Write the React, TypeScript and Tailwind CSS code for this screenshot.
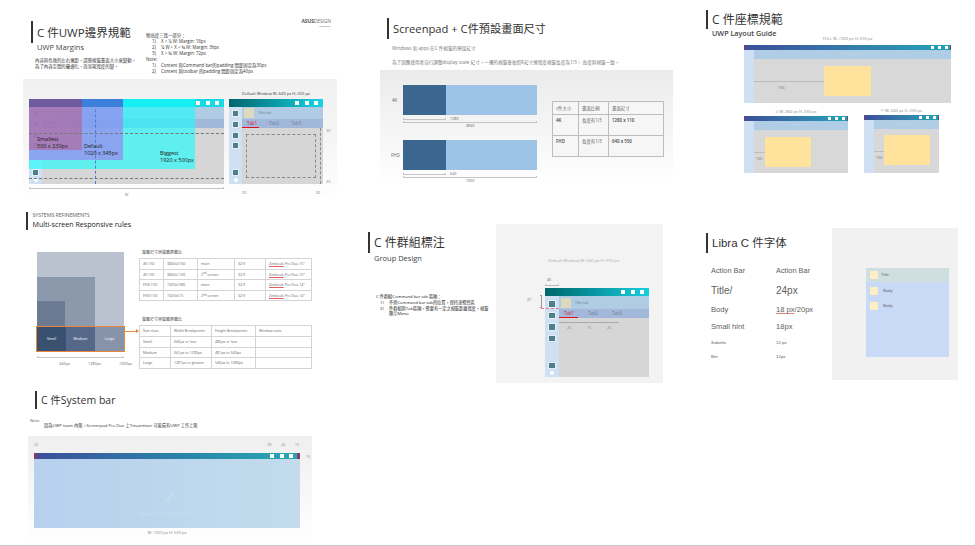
import type { ReactNode } from 'react';

const Zenbook = ({ size }: { size: string }) => (
  <>
    <span className="underline decoration-[#e06060]">Zenbook</span> Pro Duo {size}
  </>
);

function Heading({ title, sub, bar, text, subText }: { title: string; sub?: string; bar: string; text: string; subText?: string }) {
  return (
    <div className="flex gap-[4px]">
      <div className={`w-[2px] bg-[#333] shrink-0 ${bar}`} />
      <div>
        <div className={`text-[#333] whitespace-nowrap ${text}`}>{title}</div>
        {sub && <div className={`text-[#333] whitespace-nowrap ${subText}`}>{sub}</div>}
      </div>
    </div>
  );
}

function WinButtons({ box, gap }: { box: string; gap: string }) {
  return (
    <div className={`ml-auto flex items-center ${gap}`}>
      <div className={`bg-white ${box}`} />
      <div className={`bg-white ${box}`} />
      <div className={`bg-white ${box}`} />
    </div>
  );
}

function SideIcons({ icon, gap }: { icon: string; gap: string }) {
  const cls = `bg-[#4f7f8a] border border-[#e4eef6] ${icon}`;
  return (
    <div className={`flex flex-col items-center h-full ${gap}`}>
      <div className={cls} />
      <div className={cls} />
      <div className={cls} />
      <div className={cls} />
      <div className={`mt-auto ${cls}`} />
      <div className="w-[4px] h-[4px] rounded-full bg-white -mt-[2px] mb-[2px]" />
    </div>
  );
}

function AppWindow({ bar, side, head, tabs, tabGap, underline, icons, children }: {
  bar: string; side: string; head: string; tabs: string; tabGap: string; underline: string; icons: ReactNode; children?: ReactNode;
}) {
  return (
    <div className="flex flex-col h-full w-full">
      <div className={`flex items-center pr-[5px] shrink-0 ${bar}`}>
        <WinButtons box="w-[4px] h-[3.5px]" gap="gap-[5.5px]" />
      </div>
      <div className="flex flex-1">
        <div className={`bg-[#cfe0f2] shrink-0 ${side}`}>{icons}</div>
        <div className="flex flex-col flex-1">
          <div className={`bg-[#b0cbe4] flex items-center gap-[4px] pl-[2px] shrink-0 ${head}`}>
            <div className="w-[10px] h-[10px] bg-[#dcd9bf]" />
            <span className="text-[3.5px] text-[#6d7f90]">Title tab</span>
          </div>
          <div className={`bg-[#a2b8da] flex items-center pl-[5px] shrink-0 relative ${tabs} ${tabGap}`}>
            <span className="text-[4.4px] text-[#d8202a]">Tab1</span>
            <span className="text-[4.4px] text-[#6d7f90]">Tab2</span>
            <span className="text-[4.4px] text-[#6d7f90]">Tab3</span>
            <div className={`absolute left-0 bottom-0 h-[1px] bg-[#e0101c] ${underline}`} />
          </div>
          <div className="flex-1 bg-[#d6d6d6] relative">{children}</div>
        </div>
      </div>
    </div>
  );
}

function GuideWindow({ yellow, tbc, line }: { yellow: string; tbc: string; line: string }) {
  return (
    <div className="flex flex-col w-full h-full">
      <div className="h-[4.5px] bg-gradient-to-r from-[#3a4f9a] to-[#1ea3b8] flex items-center pr-[2px] border-x border-[#8a3a6a] shrink-0">
        <WinButtons box="w-[3px] h-[2.5px]" gap="gap-[4px]" />
      </div>
      <div className="flex flex-1">
        <div className="w-[10px] bg-[#cfe0f2] shrink-0" />
        <div className="flex flex-col flex-1">
          <div className="h-[9px] bg-[#b0cde6] flex items-center justify-center shrink-0">
            <span className="text-[3.5px] text-[#c3d6e8]">Window title</span>
          </div>
          <div className="flex-1 bg-[#d8d8d8] relative">
            <div className={`absolute left-0 h-px bg-[#bcbcbc] ${line}`} />
            <div className={`absolute bg-[#ffe29b] ${yellow}`} />
            <span className={`absolute text-[4px] text-[#888] ${tbc}`}>TBC</span>
          </div>
        </div>
      </div>
    </div>
  );
}

function RulesTable({ title, cols, rows, titleBox }: { title: string; cols: string[]; rows: ReactNode[][]; titleBox: string }) {
  return (
    <div className="w-[172px]">
      <div className={`text-[4px] text-[#444] pl-[3px] ${titleBox}`}>{title}</div>
      <table className="table-fixed w-full border-collapse">
        <colgroup>
          {cols.map((c, i) => <col key={i} className={c} />)}
        </colgroup>
        <tbody>
          {rows.map((r, i) => (
            <tr key={i} className="h-[10.6px]">
              {r.map((c, j) => (
                <td key={j} className="border border-[#d4d4d4] px-[3px] text-[3.6px] text-[#666] whitespace-nowrap overflow-hidden">{c}</td>
              ))}
            </tr>
          ))}
        </tbody>
      </table>
    </div>
  );
}

function Ruler({ width }: { width: string }) {
  return <div className={`h-[2px] border-x border-b border-[#c4c4c4] shrink-0 ${width}`} />;
}

function BarChart({ label, labelBox, part, whole }: { label: string; labelBox: string; part: string; whole: string }) {
  return (
    <div>
      <div className="flex items-center">
        <span className={`text-[4.5px] text-[#666] shrink-0 ${labelBox}`}>{label}</span>
        <div className="w-[134px] h-[30px] bg-[#9dc3e6]">
          <div className="w-[43px] h-full bg-[#3a6690]" />
        </div>
      </div>
      <div className="pl-[12px] mt-[1px] text-[3.8px] text-[#666]">
        <div className="flex items-center h-[5px] gap-[4px]">
          <Ruler width="w-[43px]" />
          <span>{part}</span>
        </div>
        <Ruler width="w-[134px]" />
        <div className="w-[134px] text-center h-[6px] leading-[6px]">{whole}</div>
      </div>
    </div>
  );
}

function TypeRow({ a, b, box }: { a: string; b: ReactNode; box: string }) {
  return (
    <div className={`flex items-center text-[#5e5e5e] ${box}`}>
      <span className="w-[65px]">{a}</span>
      <span>{b}</span>
    </div>
  );
}

function FontItem({ label, gap, top }: { label: string; gap: string; top: string }) {
  return (
    <div className={`flex items-center pl-[4px] ${gap} ${top}`}>
      <div className="w-[8px] h-[8px] bg-[#fdeec6]" />
      {label}
    </div>
  );
}

function NumItem({ n, children, indent }: { n: string; children: ReactNode; indent: string }) {
  return (
    <div className={`flex ${indent}`}>
      <span className="w-[9px] shrink-0">{n}</span>
      <span>{children}</span>
    </div>
  );
}

export default function App() {
  return (
    <div className='relative w-[975px] h-[546px] bg-white overflow-hidden font-["Open_Sans","Noto_Sans_CJK_TC",sans-serif]'>
      {/* UWP margins */}
      <section className="absolute left-[23px] top-[18px] w-[314px] flex flex-col">
        <div className="flex h-[61px] pl-[8px] pr-[6px]">
          <div className="w-[115px] shrink-0 pt-[3px]">
            <Heading title="C 件UWP邊界規範" sub="UWP Margins" bar="h-[22px]" text="text-[11.5px] leading-[18px] pt-[3px]" subText="text-[7.5px] leading-[10px] text-[#444]" />
            <div className="ml-[4px] mt-[5px] text-[4.4px] leading-[6px] text-[#333] whitespace-nowrap">
              <div>內容與色塊的左右邊距，請隨視窗畫面大小來變動。</div>
              <div>為了內容空間的最適化，而呈現寬度的變。</div>
            </div>
          </div>
          <div className="pt-[14px] text-[4.4px] leading-[6px] text-[#333] whitespace-nowrap">
            <div>物高度三寬一部分：</div>
            <NumItem n="1)" indent="pl-[6px]">X &lt; ¼ W: Margin: 18px</NumItem>
            <NumItem n="2)" indent="pl-[6px]">¼ W &lt; X &lt; ¾ W: Margin: 36px</NumItem>
            <NumItem n="3)" indent="pl-[6px]">X &gt; ¾ W: Margin: 72px</NumItem>
            <div>Note:</div>
            <NumItem n="1)" indent="pl-[6px]">Content 與Command bar的padding 間距固定為30px</NumItem>
            <NumItem n="2)" indent="pl-[6px]">Content 與toolbar 的padding 間距固定為40px</NumItem>
          </div>
          <div className="ml-auto pt-[1px] text-right leading-none text-[#777]">
            <div className="text-[5px] tracking-tight"><b className="text-[#555]">ASUS</b>DESIGN</div>
            <div className="text-[2.5px] mt-[1px]">Singapore</div>
          </div>
        </div>
        <div className="h-[121px] bg-gradient-to-b from-[#f1f1f1] via-[#f5f5f5] to-white px-[6px] pt-[12px] flex gap-[5px]">
          <div className="w-[195px] pt-[8px]">
            <div className="relative h-[85px]">
              <AppWindow bar="h-[8px] bg-[#18d8e4]" side="w-[13px] pt-[3px]" head="h-[12px]" tabs="h-[9px]" tabGap="gap-[12px]" underline="w-[17px]"
                icons={<SideIcons icon="w-[7px] h-[7px]" gap="gap-[3.8px]" />} />
              <div className="absolute left-0 top-0 w-[166px] h-[70px] bg-[#11ffff]/60" />
              <div className="absolute left-0 top-0 w-[94px] h-[61px] bg-[#9c85f0]/70" />
              <div className="absolute left-0 top-0 w-[53px] h-[51px] bg-[#b76093]/60" />
              <div className="absolute left-0 top-0 w-[94px] h-[8px] bg-[#3a80dc]" />
              <div className="absolute left-0 top-0 w-[53px] h-[8px] bg-[#6e5a9e]" />
              <div className="absolute left-0 top-[34px] w-full border-t border-dashed border-[#777]" />
              <div className="absolute left-0 top-[79px] w-full border-t border-dashed border-[#777]" />
              <div className="absolute left-[66px] top-0 h-full border-l border-dashed border-[#5878c8]" />
              <div className="absolute left-[8px] top-[37px] text-[5.5px] leading-[7px] text-[#222] whitespace-nowrap">Smallest<br />500 x 230px</div>
              <div className="absolute left-[55px] top-[44px] text-[5.5px] leading-[7px] text-[#222] whitespace-nowrap">Default<br />1020 x 345px</div>
              <div className="absolute left-[131px] top-[51px] text-[5.5px] leading-[7px] text-[#222] whitespace-nowrap">Biggest<br />1920 x 500px</div>
            </div>
            <div className="mt-[3px]"><Ruler width="w-full" /></div>
            <div className="text-center text-[4px] text-[#888] mt-[3px]">W</div>
          </div>
          <div className="w-[94px]">
            <div className="h-[8px] text-center text-[4px] leading-[6px] text-[#333] whitespace-nowrap">Default Window W=640 px H=550 px</div>
            <div className="relative h-[85px]">
              <AppWindow bar="h-[8px] bg-gradient-to-r from-[#00666c] to-[#18d4e4]" side="w-[13px] pt-[3px]" head="h-[12px]" tabs="h-[9px]" tabGap="gap-[12px]" underline="w-[17px]"
                icons={<SideIcons icon="w-[7px] h-[7px]" gap="gap-[3.8px]" />}>
                <div className="absolute left-[4px] right-[7px] top-[6px] bottom-[6px] border border-dashed border-[#8a8a8a]" />
                <div className="absolute right-[2px] top-0 bottom-0 border-l border-dashed border-[#8a8a8a]" />
              </AppWindow>
              <span className="absolute left-full ml-[3px] top-[29px] text-[4px] text-[#888]">30</span>
              <span className="absolute left-full ml-[3px] top-[80px] text-[4px] text-[#888]">40</span>
            </div>
            <div className="flex justify-between px-[13px] text-[4px] text-[#888] mt-[6px]">
              <span>30</span>
              <span className="-mr-[10px]">30</span>
            </div>
          </div>
        </div>
      </section>

      {/* Multi-screen rules */}
      <section className="absolute left-[26px] top-[212px] w-[286px]">
        <div className="flex gap-[5px] h-[18px]">
          <div className="w-[1.5px] h-[18px] bg-[#333]" />
          <div className="leading-none whitespace-nowrap">
            <div className="text-[5.4px] text-[#666] tracking-tight mt-[1px]">SYSTEMS REFINEMENTS</div>
            <div className="text-[7.1px] text-[#222] mt-[3px]">Multi-screen Responsive rules</div>
          </div>
        </div>
        <div className="flex mt-[19px]">
          <div className="w-[113px] pl-[10px] pt-[3px] shrink-0">
            <div className="ml-[1px] w-[87px] h-[74px] bg-[#bac2cf] flex items-end">
              <div className="w-[58px] h-[49px] bg-[#8c99ad] flex items-end">
                <div className="w-[28px] h-[25px] bg-[#6b7b94]" />
              </div>
            </div>
            <div className="flex items-start">
              <div className="w-[89px] h-[26px] border border-[#e8873c] flex text-[3.6px] text-white shrink-0">
                <div className="w-[29px] bg-[#39506f] flex items-center justify-center">Small</div>
                <div className="w-[29px] bg-[#56688a] flex items-center justify-center">Medium</div>
                <div className="flex-1 bg-[#8793a8] flex items-center justify-center">Large</div>
              </div>
              <div className="flex items-center mt-[3px]">
                <div className="w-[11px] h-[1px] bg-[#e8873c]" />
                <div className="border-y-[2px] border-y-transparent border-l-[3px] border-l-[#e8873c]" />
              </div>
            </div>
            <div className="ml-[1px] mt-[4px]"><Ruler width="w-[87px]" /></div>
            <div className="ml-[3px] w-[93px] grid grid-cols-3 text-right text-[3.8px] text-[#666] mt-[3px]">
              <span>640px</span>
              <span>1280px</span>
              <span>1920px</span>
            </div>
          </div>
          <div className="flex flex-col gap-[15px]">
            <RulesTable title="螢幕尺寸與螢幕屏幕比" titleBox="h-[9px] leading-[7px]"
              cols={['w-[24px]', 'w-[34px]', 'w-[37px]', 'w-[31px]', 'w-[46px]']}
              rows={[
                ['4K (16)', '3840x2160', 'main', '32:9', <Zenbook size={'15"'} />],
                ['4K (16)', '3840x1100', <>2<sup>nd</sup> screen</>, '32:9', <Zenbook size={'15"'} />],
                ['FHD (16)', '1920x1080', 'main', '32:9', <Zenbook size={'14"'} />],
                ['FHD (16)', '1920x515', <>2<sup>nd</sup> screen</>, '32:9', <Zenbook size={'14"'} />],
              ]} />
            <RulesTable title="螢幕尺寸與螢幕屏幕比" titleBox="h-[9px] leading-[7px]"
              cols={['w-[31px]', 'w-[41px]', 'w-[44px]', 'w-[56px]']}
              rows={[
                ['Size class', 'Width Breakpoints', 'Height Breakpoints', 'Window sizes'],
                ['Small', '640px or less', '480px or less', ''],
                ['Medium', '641px to 1280px', '481px to 540px', ''],
                ['Large', '1281px or greater', '540px to 1080px', ''],
              ]} />
          </div>
        </div>
      </section>

      {/* Screenpad sizes */}
      <section className="absolute left-[380px] top-[18px] w-[293px]">
        <div className="pl-[7px]">
          <Heading title="Screenpad + C件預設畫面尺寸" bar="h-[21px]" text="text-[11.2px] leading-[21px]" />
        </div>
        <div className="pl-[12px] mt-[6px] h-[6px] text-[4.6px] leading-[6px] text-[#777] whitespace-nowrap">Windows 和 apps 在C 件視窗的預設尺寸</div>
        <div className="pl-[12px] mt-[8px] h-[6px] text-[4.6px] leading-[6px] text-[#777] whitespace-nowrap">為了因應使用者自行調整display scale 尺寸，一邊的視窗會依照R尺寸連寬度視窗長度為1/3。 高度與視窗一致。</div>
        <div className="mt-[5px] h-[115px] bg-gradient-to-b from-[#ebebeb] to-white pl-[11px] flex">
          <div className="pt-[15px] flex flex-col gap-[11px] w-[146px] shrink-0">
            <BarChart label="4K" labelBox="w-[12px] pl-[1px]" part="1280" whole="3840" />
            <BarChart label="FHD" labelBox="w-[12px]" part="640" whole="1920" />
          </div>
          <table className="ml-[15px] mt-[31px] w-[112px] h-[55px] table-fixed border-collapse text-[4.4px] text-[#666]">
            <colgroup>
              <col className="w-[26px]" />
              <col className="w-[30px]" />
              <col />
            </colgroup>
            <tbody>
              <tr className="h-[13px] bg-[#f6f6f6]">
                <td className="border border-[#bcbcbc] pl-[3px]">c件大小</td>
                <td className="border border-[#bcbcbc] pl-[3px]">畫面比例</td>
                <td className="border border-[#bcbcbc] pl-[3px]">畫面尺寸</td>
              </tr>
              <tr className="h-[21px] align-top bg-[#f6f6f6]">
                <td className="border border-[#bcbcbc] pl-[3px] pt-[2px] font-semibold text-[#444]">4K</td>
                <td className="border border-[#bcbcbc] pl-[3px] pt-[2px]">長度有1/3</td>
                <td className="border border-[#bcbcbc] pl-[3px] pt-[2px] font-semibold text-[#444]">1280 x 110</td>
              </tr>
              <tr className="h-[21px] align-top bg-[#f6f6f6]">
                <td className="border border-[#bcbcbc] pl-[3px] pt-[2px] font-semibold text-[#444]">FHD</td>
                <td className="border border-[#bcbcbc] pl-[3px] pt-[2px]">長度有1/3</td>
                <td className="border border-[#bcbcbc] pl-[3px] pt-[2px] font-semibold text-[#444]">640 x 550</td>
              </tr>
            </tbody>
          </table>
        </div>
      </section>

      {/* Group design */}
      <section className="absolute left-[368px] top-[224px] flex">
        <div className="w-[128px] shrink-0 pt-[8px]">
          <Heading title="C 件群組標注" sub="Group Design" bar="h-[21px]" text="text-[12px] leading-[21px]" subText="text-[7.5px] leading-[10px] text-[#444]" />
          <div className="ml-[8px] mt-[31px] w-[116px] text-[4.2px] leading-[5.8px] text-[#222]">
            <div>C 件群組Command bar tab 區隔：</div>
            <NumItem n="1)" indent="pl-[4px]">不遮Command bar tab的位置，保持流暢性區</NumItem>
            <NumItem n="2)" indent="pl-[4px]">件群組與Tab區隔，需要有一定之視窗距離寬度，視窗顯示Menu</NumItem>
          </div>
        </div>
        <div className="w-[167px] h-[159px] bg-[#f3f3f3] pt-[34px] pl-[49px]">
          <div className="ml-[3px] h-[30px] text-[4.2px] leading-[6px] text-[#aaa] whitespace-nowrap">Default Window W=640 px H=550 px</div>
          <div className="relative w-[104px] h-[89px]">
            <AppWindow bar="h-[8px] bg-gradient-to-r from-[#00666c] to-[#18cfe0]" side="w-[14px] pt-[4px]" head="h-[13px]" tabs="h-[9px]" tabGap="gap-[14px]" underline="w-[19px]"
              icons={<SideIcons icon="w-[7.5px] h-[7.5px]" gap="gap-[4px]" />}>
              <div className="flex pt-[4px] text-[3.6px] text-[#888]">
                <div className="w-[20px] text-center border-t border-[#aaa] pt-[2px]">20</div>
                <div className="w-[20px] text-center border-t border-[#aaa] pt-[2px]">15</div>
                <div className="w-[20px] text-center border-t border-[#aaa] pt-[2px]">20</div>
              </div>
            </AppWindow>
            <span className="absolute left-[2px] -top-[11px] text-[3.6px] text-[#666]">40</span>
            <div className="absolute left-0 -top-[4px] w-[14px] h-[2px] border-x border-b border-[#bbb]" />
            <span className="absolute -left-[18px] top-[9px] text-[3.6px] text-[#666]">27</span>
            <div className="absolute -left-[5px] top-[7px] w-[2px] h-[13px] border-y border-r border-[#999]" />
            <div className="absolute -left-[4px] top-[20px] w-[18px] border-t border-dashed border-[#e08080]" />
          </div>
        </div>
      </section>

      {/* Layout guide */}
      <section className="absolute left-[706px] top-[10px] w-[245px]">
        <Heading title="C 件座標規範" sub="UWP Layout Guide" bar="h-[19px]" text="text-[12px] leading-[19px]" subText="text-[7.2px] leading-[9px] font-semibold text-[#444]" />
        <div className="ml-[38px] -mt-[2px] w-[207px]">
          <div className="h-[9px] text-center text-[4px] leading-[6px] text-[#888]">FULL W=1920 px H=550 px</div>
          <div className="h-[58px]">
            <GuideWindow yellow="left-[70px] top-[7px] w-[47px] h-[30px]" tbc="left-[24px] top-[26px]" line="top-[22px] w-[70px]" />
          </div>
          <div className="flex gap-[16px] mt-[5px] items-end">
            <div className="w-[104px]">
              <div className="h-[7px] text-center text-[4px] leading-[6px] text-[#888]">¾ W=960 px H=550 px</div>
              <div className="h-[57px]">
                <GuideWindow yellow="left-[11px] top-[7px] w-[46px] h-[30px]" tbc="left-[2px] top-[26px]" line="top-[22px] w-[11px]" />
              </div>
            </div>
            <div className="w-[75px]">
              <div className="h-[7px] text-center text-[4px] leading-[6px] text-[#888]">½ W=640 px H=550 px</div>
              <div className="h-[58px]">
                <GuideWindow yellow="left-[10px] top-[6px] w-[46px] h-[30px]" tbc="left-[2px] top-[26px]" line="top-[22px] w-[10px]" />
              </div>
            </div>
          </div>
        </div>
      </section>

      {/* Fonts */}
      <section className="absolute left-[706px] top-[228px] flex font-['Liberation_Sans','Noto_Sans_CJK_TC',sans-serif]">
        <div className="w-[126px] shrink-0 pt-[5px]">
          <Heading title="Libra C 件字体" bar="h-[20px]" text="text-[11.5px] leading-[20px]" />
          <div className="pl-[5px] mt-[11px]">
            <TypeRow a="Action Bar" b="Action Bar" box="h-[14px] text-[7.4px]" />
            <TypeRow a="Title/" b="24px" box="h-[24px] text-[10px]" />
            <TypeRow a="Body" b={<><span className="underline decoration-[#e08080]">18 px</span>/20px</>} box="h-[16px] text-[7.6px]" />
            <TypeRow a="Small hint" b="18px" box="h-[18px] text-[7.6px]" />
            <TypeRow a="Subinfo" b="12 px" box="h-[14px] text-[4.4px]" />
            <TypeRow a="Btn" b="12px" box="h-[14px] text-[4.4px]" />
          </div>
        </div>
        <div className="w-[126px] h-[152px] bg-[#f1f1f1] flex items-start justify-end pt-[40px] pr-[9px]">
          <div className="w-[83px] h-[89px] bg-[#c9daf6] text-[4.2px] text-[#666]">
            <div className="h-[14px] bg-[#cfdfe0] flex items-center gap-[3px] pl-[4px]">
              <div className="w-[8px] h-[8px] bg-[#fdeec6]" />Title
            </div>
            <FontItem label="Body" gap="gap-[5px]" top="mt-[5px]" />
            <FontItem label="Body" gap="gap-[5px]" top="mt-[7px]" />
          </div>
        </div>
      </section>

      {/* System bar */}
      <section className="absolute left-[28px] top-[391px] w-[284px]">
        <div className="pl-[7px]">
          <Heading title="C 件System bar" bar="h-[18px]" text="text-[10.5px] leading-[18px]" />
        </div>
        <div className="pl-[2px] mt-[9px] h-[5px] text-[3.8px] leading-[5px] text-[#555]">Note:</div>
        <div className="pl-[16px] h-[9px] text-[4.2px] leading-[5px] text-[#333] whitespace-nowrap">因為UWP team 內限，Screenpad Pro Duo 上Tmaximizer 可能還有UWP 工作上限</div>
        <div className="mt-[4px] h-[108px] bg-gradient-to-b from-[#efefef] to-white px-[6px] pt-[6px]">
          <div className="relative flex justify-between w-[266px] h-[11px] text-[3.4px] text-[#888]">
            <span>24</span>
            <div className="flex gap-[10px] pr-[1px]">
              <span>28</span>
              <span>44</span>
              <span>15</span>
            </div>
          </div>
          <div className="relative w-[266px] h-[75px] flex flex-col">
            <div className="h-[6px] bg-gradient-to-r from-[#3a4f9a] via-[#2a7fa8] to-[#28a8b0] flex items-center pr-[4px] border-x-[3px] border-[#8a3a6a] shrink-0">
              <WinButtons box="w-[4px] h-[3.5px]" gap="gap-[5.5px]" />
            </div>
            <div className="flex-1 bg-gradient-to-r from-[#b7d0ee] to-[#c2dcec] flex flex-col items-center pt-[30px]">
              <svg width="18" height="18" viewBox="0 0 18 18" className="opacity-30">
                <path d="M1 17 L17 1 L11 15 L8 11 Z" fill="#d8e8f2" />
              </svg>
              <span className="text-[3.6px] text-[#cfe0ee] mt-[4px]">Project title text for the launcher</span>
            </div>
            <span className="absolute left-full ml-[6px] top-[1px] text-[3.4px] text-[#888]">10</span>
          </div>
          <div className="w-[266px] mt-[2px] text-center text-[4px] text-[#888]">W: 1920 px H: 530 px</div>
        </div>
      </section>

      <div className="absolute left-0 top-[545px] w-full h-[1px] bg-[#c8c8c8]" />
    </div>
  );
}
